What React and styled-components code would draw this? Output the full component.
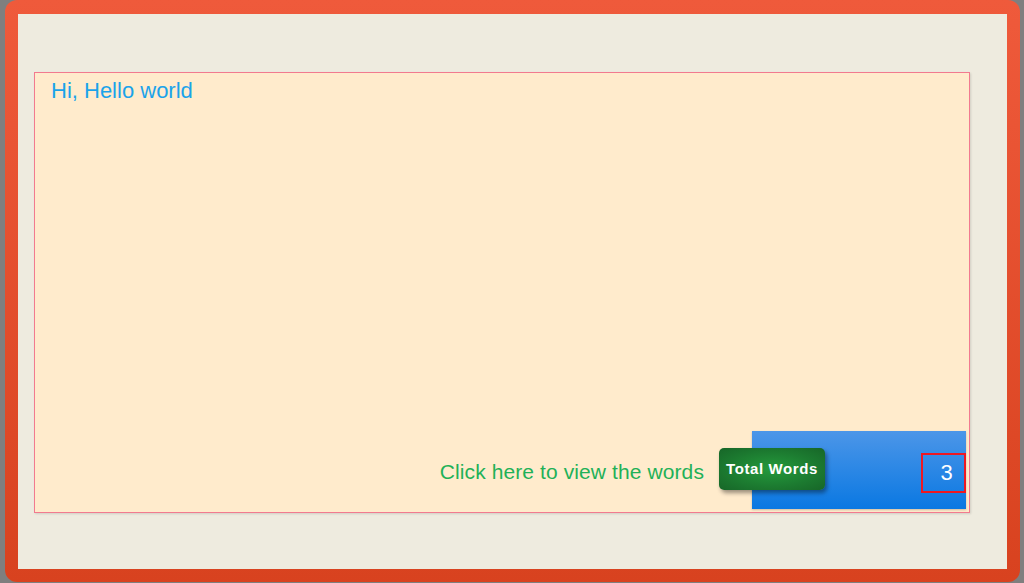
import React from 'react'
import styled, { createGlobalStyle } from 'styled-components'

const GlobalStyle = createGlobalStyle`
    html, body {
        margin: 0;
        padding: 0;
        background: #7f7f7f;
        font-family: "Liberation Sans", Arial, sans-serif;
        overflow: hidden;
    }
`

const Frame = styled.div({
    margin: "0 4px 0 5px",
    height: "582px",
    boxSizing: "border-box",
    padding: "14px 13px 13px 13px",
    borderRadius: "12px",
    background: "linear-gradient(to bottom, #ef5a3b, #d8421f)",
    display: "flex",
})

const Stage = styled.div({
    flex: 1,
    background: "#eeebdf",
    padding: "58px 37px 0 16px",
})

const Panel = styled.div({
    height: "441px",
    boxSizing: "border-box",
    border: "1px solid #f27a8f",
    background: "#ffebcc",
    boxShadow: "1px 1px 2px rgba(0, 0, 0, 0.12)",
    display: "flex",
    flexDirection: "column",
    justifyContent: "space-between",
    padding: "5px 3px 3px 16px",
})

const Greeting = styled.div({
    fontSize: "22px",
    lineHeight: "26px",
    color: "#1ba3ea",
})

const Footer = styled.div({
    display: "flex",
    alignItems: "center",
    justifyContent: "flex-end",
})

const Hint = styled.span({
    fontSize: "21px",
    letterSpacing: "0.1px",
    color: "#1fb158",
    marginRight: "15px",
    marginTop: "4px",
    cursor: "pointer",
})

const CountButton = styled.button({
    position: "relative",
    zIndex: 1,
    width: "106px",
    height: "42px",
    marginTop: "-3px",
    border: "none",
    borderRadius: "5px",
    background: "radial-gradient(ellipse at center, #249a3c 0%, #1c7a30 60%, #176628 100%)",
    boxShadow: "2px 3px 4px rgba(0, 0, 0, 0.4)",
    color: "#fff",
    fontFamily: "'Liberation Sans', Arial, sans-serif",
    fontWeight: "bold",
    fontSize: "15px",
    letterSpacing: "0.6px",
    padding: 0,
    cursor: "pointer",
})

const CountBox = styled.div({
    width: "214px",
    height: "78px",
    marginLeft: "-73px",
    background: "linear-gradient(to bottom, #4c96e8, #0a78e2)",
    display: "flex",
    alignItems: "center",
    justifyContent: "flex-end",
    boxShadow: "0 1px 2px rgba(0, 0, 0, 0.2)",
})

const Count = styled.div({
    width: "45px",
    height: "40px",
    marginTop: "6px",
    boxSizing: "border-box",
    border: "2px solid #ee1822",
    color: "#fff",
    fontSize: "22px",
    display: "flex",
    alignItems: "center",
    justifyContent: "center",
    paddingLeft: "6px",
})

const App = () => {
    const text = "Hi, Hello world"
    const total = text.split(/\s+/).filter(Boolean).length
    return (
        <>
            <GlobalStyle />
            <Frame>
                <Stage>
                    <Panel>
                        <Greeting>{text}</Greeting>
                        <Footer>
                            <Hint>Click here to view the words</Hint>
                            <CountButton>Total Words</CountButton>
                            <CountBox>
                                <Count>{total}</Count>
                            </CountBox>
                        </Footer>
                    </Panel>
                </Stage>
            </Frame>
        </>
    )
}

export default App
